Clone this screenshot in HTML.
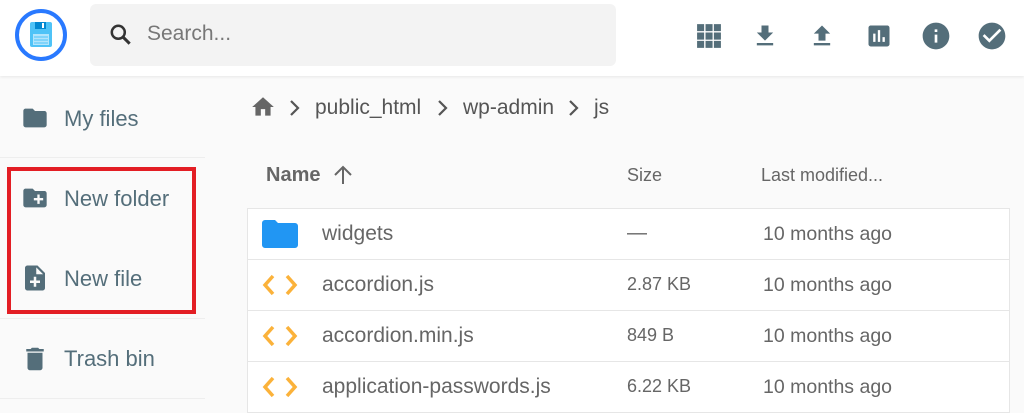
<!DOCTYPE html><html><head><style>
body{margin:0;width:1024px;height:412px;overflow:hidden;background:#fafafa;font-family:"Liberation Sans",sans-serif;position:relative}
.a{position:absolute}
.hdr{left:0;top:0;width:1024px;height:76px;background:#fff;box-shadow:0 1px 3px rgba(0,0,0,.08)}
.side{font-size:22px;color:#546e7a}
.t{font-size:20px;color:#666}
.nm{font-size:21px}
.dt{font-size:19.5px}
.row{left:247px;width:763px;height:52px;background:#fff;border:1px solid #e6e6e6;box-sizing:border-box}
</style></head><body>
<div class="a hdr"></div>
<div class="a" style="left:15px;top:9px;border:4px solid #2979ff;border-radius:50%;background:#fff;width:44px;height:44px"></div>
<svg class="a" style="left:28px;top:20px" width="26" height="28" viewBox="0 0 26 28"><rect x="2" y="2" width="22" height="25" rx="2" fill="#4fc3f7"/><rect x="7" y="2" width="11" height="7" fill="#0288d1"/><rect x="14" y="3" width="2" height="5" fill="#fff"/><rect x="5" y="14" width="16" height="11" fill="#b3e5fc"/><path d="M6 17h14M6 20h14M6 23h14" stroke="#4fc3f7"/></svg>
<div class="a" style="left:90px;top:4px;width:526px;height:62px;background:#f3f3f3;border-radius:6px"></div>
<svg class="a" style="left:108px;top:22px" width="26" height="26" viewBox="0 0 24 24"><circle cx="9.5" cy="9.5" r="6" fill="none" stroke="#333" stroke-width="2.3"/><path d="M14 14l6 6" stroke="#333" stroke-width="2.8"/></svg>
<div class="a" style="left:147px;top:22px;font-size:21px;color:#777">Search...</div>
<svg class="a" style="left:696px;top:23px" width="26" height="26" viewBox="0 0 24 24" fill="#546e7a"><path d="M1 1h6.5v6.5H1zM8.8 1h6.5v6.5H8.8zM16.5 1H23v6.5h-6.5zM1 8.8h6.5v6.5H1zM8.8 8.8h6.5v6.5H8.8zM16.5 8.8H23v6.5h-6.5zM1 16.5h6.5V23H1zM8.8 16.5h6.5V23H8.8zM16.5 16.5H23V23h-6.5z"/></svg>
<svg class="a" style="left:750px;top:22px" width="30" height="28" viewBox="0 0 24 24" fill="#546e7a"><path d="M19 9h-4V3H9v6H5l7 7 7-7zM5 18v2h14v-2z"/></svg>
<svg class="a" style="left:807px;top:22px" width="30" height="28" viewBox="0 0 24 24" fill="#546e7a"><path d="M9 16h6v-6h4l-7-7-7 7h4zm-4 2h14v2H5z"/></svg>
<svg class="a" style="left:865px;top:22px" width="28" height="28" viewBox="0 0 24 24" fill="#546e7a"><path d="M19 3H5c-1.1 0-2 .9-2 2v14c0 1.1.9 2 2 2h14c1.1 0 2-.9 2-2V5c0-1.1-.9-2-2-2zM9 17H7v-7h2v7zm4 0h-2V7h2v10zm4 0h-2v-4h2v4z"/></svg>
<svg class="a" style="left:920px;top:20px" width="32" height="32" viewBox="0 0 24 24" fill="#546e7a"><path d="M12 2C6.48 2 2 6.48 2 12s4.48 10 10 10 10-4.48 10-10S17.52 2 12 2zm1 15h-2v-6h2v6zm0-8h-2V7h2v2z"/></svg>
<svg class="a" style="left:976px;top:20px" width="32" height="32" viewBox="0 0 24 24" fill="#546e7a"><path d="M12 2C6.48 2 2 6.48 2 12s4.48 10 10 10 10-4.48 10-10S17.52 2 12 2zm-2 15l-5-5 1.41-1.41L10 14.17l7.59-7.59L19 8l-9 9z"/></svg>

<svg class="a" style="left:20px;top:104px" width="30" height="28" viewBox="0 0 24 24" fill="#546e7a"><path d="M10 4H4c-1.1 0-2 .9-2 2v12c0 1.1.9 2 2 2h16c1.1 0 2-.9 2-2V8c0-1.1-.9-2-2-2h-8l-2-2z"/></svg>
<div class="a side" style="left:64px;top:106px">My files</div>
<div class="a" style="left:0;top:157px;width:205px;height:1px;background:#eee"></div>
<div class="a" style="left:0;top:318px;width:205px;height:1px;background:#eee"></div>
<div class="a" style="left:0;top:398px;width:205px;height:1px;background:#eee"></div>
<svg class="a" style="left:20px;top:184px" width="30" height="28" viewBox="0 0 24 24" fill="#546e7a"><path d="M20 6h-8l-2-2H4c-1.1 0-2 .9-2 2v12c0 1.1.9 2 2 2h16c1.1 0 2-.9 2-2V8c0-1.1-.9-2-2-2zm-1 8h-3v3h-2v-3h-3v-2h3V9h2v3h3v2z"/></svg>
<div class="a side" style="left:64px;top:186px">New folder</div>
<svg class="a" style="left:20px;top:263px" width="30" height="30" viewBox="0 0 24 24" fill="#546e7a"><path d="M14 2H6c-1.1 0-2 .9-2 2v16c0 1.1.9 2 2 2h12c1.1 0 2-.9 2-2V8l-6-6zm2 14h-3v3h-2v-3H8v-2h3v-3h2v3h3v2zm-3-7V3.5L18.5 9H13z"/></svg>
<div class="a side" style="left:64px;top:266px">New file</div>
<div class="a" style="left:7px;top:167px;width:181px;height:139px;border:4px solid #e31e24"></div>
<svg class="a" style="left:20px;top:344px" width="30" height="30" viewBox="0 0 24 24" fill="#546e7a"><path d="M6 19c0 1.1.9 2 2 2h8c1.1 0 2-.9 2-2V7H6v12zM19 4h-3.5l-1-1h-5l-1 1H5v2h14V4z"/></svg>
<div class="a side" style="left:64px;top:346px">Trash bin</div>

<svg class="a" style="left:249px;top:94px" width="28" height="26" viewBox="0 0 24 24" fill="#666"><path d="M10 20v-6h4v6h5v-8h3L12 3 2 12h3v8z"/></svg>
<svg class="a" style="left:288px;top:99px" width="12" height="18" viewBox="0 0 12 18"><path d="M3 2l7 7-7 7" fill="none" stroke="#555" stroke-width="2.2"/></svg>
<svg class="a" style="left:436px;top:99px" width="12" height="18" viewBox="0 0 12 18"><path d="M3 2l7 7-7 7" fill="none" stroke="#555" stroke-width="2.2"/></svg>
<svg class="a" style="left:567px;top:99px" width="12" height="18" viewBox="0 0 12 18"><path d="M3 2l7 7-7 7" fill="none" stroke="#555" stroke-width="2.2"/></svg>
<div class="a nm" style="left:315px;top:96px;color:#555">public_html</div>
<div class="a nm" style="left:463px;top:96px;color:#555">wp-admin</div>
<div class="a nm" style="left:594px;top:96px;color:#555">js</div>
<div class="a t" style="left:266px;top:164px;font-weight:bold;color:#666">Name</div>
<svg class="a" style="left:331px;top:163px" width="24" height="24" viewBox="0 0 24 24"><path d="M12 21V4M4 12l8-8 8 8" fill="none" stroke="#666" stroke-width="2"/></svg>
<div class="a t" style="left:627px;top:165px;font-size:18px">Size</div>
<div class="a t" style="left:761px;top:165px;font-size:18px">Last modified...</div>

<div class="a row" style="top:208px"></div>
<div class="a row" style="top:259px"></div>
<div class="a row" style="top:310px"></div>
<div class="a row" style="top:361px"></div>
<svg class="a" style="left:262px;top:220px" width="36" height="28" viewBox="0 0 36 28"><path d="M3 0h10l3 3h17a3 3 0 0 1 3 3v19a3 3 0 0 1-3 3H3a3 3 0 0 1-3-3V3a3 3 0 0 1 3-3z" fill="#2196f3"/></svg>
<div class="a t nm" style="left:322px;top:222px">widgets</div><div class="a t" style="left:627px;top:222px">—</div><div class="a t dt" style="left:763px;top:223px">10 months ago</div>
<svg class="a" style="left:262px;top:273px" width="36" height="24" viewBox="0 0 36 24"><path d="M11 3L3 12l8 9M25 3l8 9-8 9" fill="none" stroke="#fbb23a" stroke-width="3.5"/></svg>
<div class="a t nm" style="left:322px;top:273px">accordion.js</div><div class="a t" style="left:627px;top:274px;font-size:18px">2.87 KB</div><div class="a t dt" style="left:763px;top:274px">10 months ago</div>
<svg class="a" style="left:262px;top:324px" width="36" height="24" viewBox="0 0 36 24"><path d="M11 3L3 12l8 9M25 3l8 9-8 9" fill="none" stroke="#fbb23a" stroke-width="3.5"/></svg>
<div class="a t nm" style="left:322px;top:324px">accordion.min.js</div><div class="a t" style="left:627px;top:325px;font-size:18px">849 B</div><div class="a t dt" style="left:763px;top:325px">10 months ago</div>
<svg class="a" style="left:262px;top:375px" width="36" height="24" viewBox="0 0 36 24"><path d="M11 3L3 12l8 9M25 3l8 9-8 9" fill="none" stroke="#fbb23a" stroke-width="3.5"/></svg>
<div class="a t nm" style="left:322px;top:375px">application-passwords.js</div><div class="a t" style="left:627px;top:376px;font-size:18px">6.22 KB</div><div class="a t dt" style="left:763px;top:376px">10 months ago</div>
</body></html>
